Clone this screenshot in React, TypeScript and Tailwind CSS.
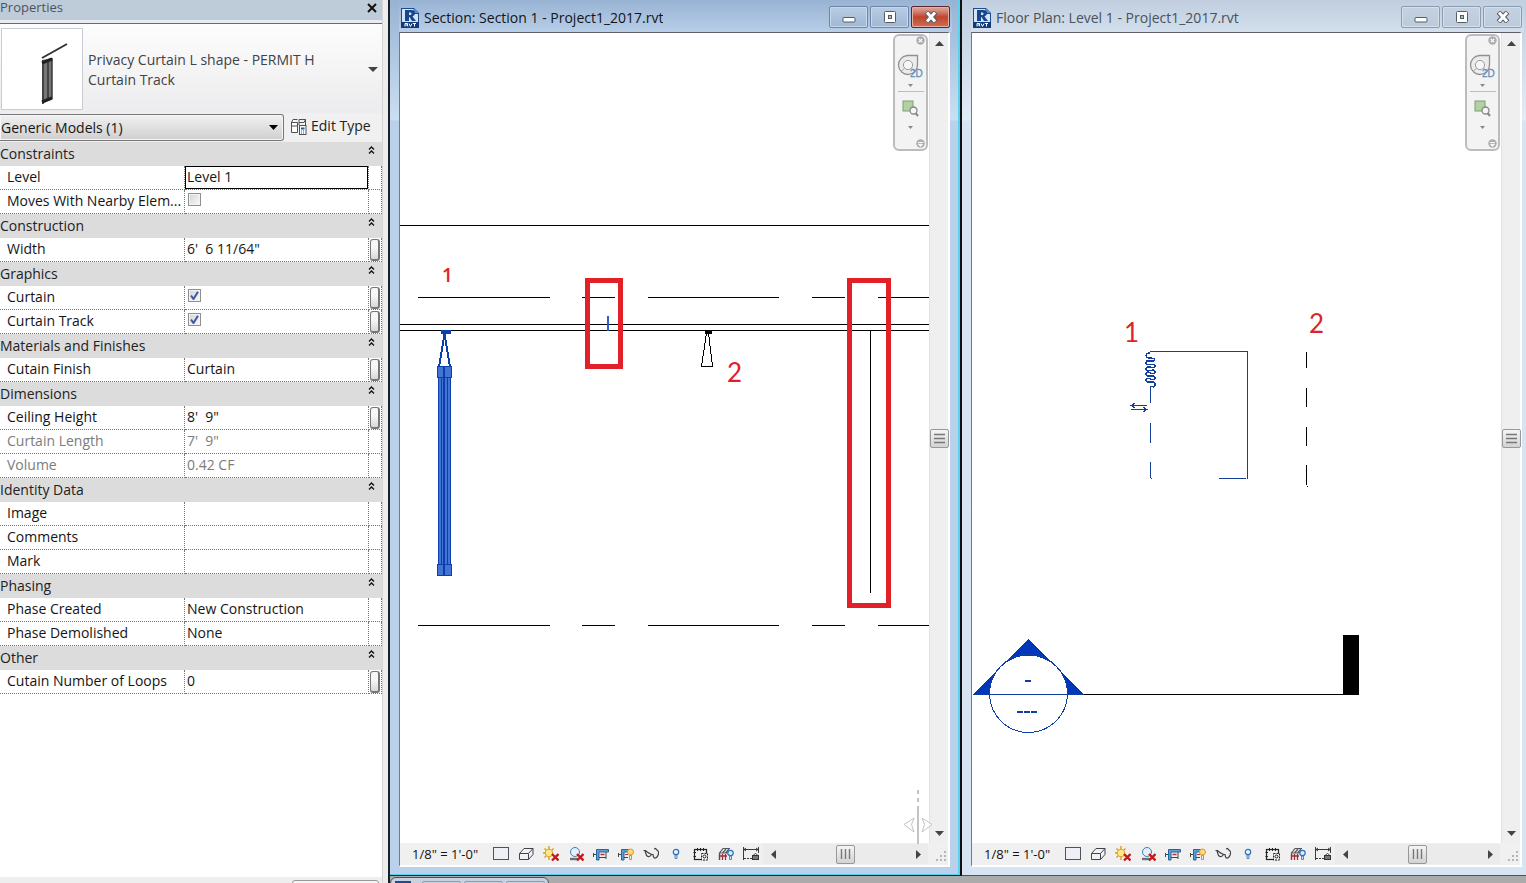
import React from "react";

type Row = {
  id: string;
  name: string;
  value?: string;
  checked?: boolean;
  link?: boolean;
  muted?: boolean;
  focus?: boolean;
};

const groups: { title: string; rows: Row[] }[] = [
  {
    title: "Constraints",
    rows: [
      { id: "level", name: "Level", value: "Level 1", focus: true },
      { id: "moves", name: "Moves With Nearby Elem...", checked: false },
    ],
  },
  { title: "Construction", rows: [{ id: "width", name: "Width", value: "6'  6 11/64\"", link: true }] },
  {
    title: "Graphics",
    rows: [
      { id: "curtain", name: "Curtain", checked: true, link: true },
      { id: "track", name: "Curtain Track", checked: true, link: true },
    ],
  },
  { title: "Materials and Finishes", rows: [{ id: "finish", name: "Cutain Finish", value: "Curtain", link: true }] },
  {
    title: "Dimensions",
    rows: [
      { id: "ceiling", name: "Ceiling Height", value: "8'  9\"", link: true },
      { id: "length", name: "Curtain Length", value: "7'  9\"", muted: true },
      { id: "volume", name: "Volume", value: "0.42 CF", muted: true },
    ],
  },
  {
    title: "Identity Data",
    rows: [
      { id: "image", name: "Image", value: "" },
      { id: "comments", name: "Comments", value: "" },
      { id: "mark", name: "Mark", value: "" },
    ],
  },
  {
    title: "Phasing",
    rows: [
      { id: "created", name: "Phase Created", value: "New Construction" },
      { id: "demolished", name: "Phase Demolished", value: "None" },
    ],
  },
  { title: "Other", rows: [{ id: "loops", name: "Cutain Number of Loops", value: "0", link: true }] },
];

function PropertyRow({ row }: { row: Row }) {
  return (
    <tr className="h-6">
      <th scope="row" className="h-6 border-r border-b border-dotted border-[#777] p-0 pl-[7px] text-left font-normal">
        <label htmlFor={row.id} className={`block h-[23px] leading-[22px] whitespace-nowrap ${row.muted ? "text-[#7c7c7c]" : "text-[#151515]"}`}>
          {row.name}
        </label>
      </th>
      <td className="h-6 border-r border-b border-dotted border-[#777] p-0">
        {row.checked !== undefined ? (
          <span className="flex h-[23px] items-start pt-[3px] pl-[3px]">
            <input
              id={row.id}
              type="checkbox"
              defaultChecked={row.checked}
              className="peer size-[13px] appearance-none border border-[#8e8f8f] bg-linear-to-br from-[#cfd3da] to-[#fbfbfb] shadow-[inset_0_0_0_1px_#f4f4f4]"
            />
            <svg className="pointer-events-none invisible mt-[2px] -ml-[11px] size-[9px] peer-checked:visible" viewBox="0 0 9 9" aria-hidden="true">
              <path d="M1 4.5 3.5 8 8 0.8" fill="none" stroke="#42589b" strokeWidth="2" />
            </svg>
          </span>
        ) : (
          <input
            id={row.id}
            type="text"
            defaultValue={row.value}
            disabled={row.muted}
            className={`block h-[23px] w-full bg-white pb-[2px] outline-none ${row.focus ? "border border-black pl-px" : "pl-[2px]"} ${row.muted ? "text-[#7c7c7c]" : "text-[#151515]"}`}
          />
        )}
      </td>
      <td className="h-6 border-r border-b border-dotted border-[#777] p-0">
        {row.link && (
          <button
            type="button"
            aria-label={`Associate ${row.name}`}
            className="mt-px ml-px block h-[22px] w-[10px] rounded-[3px] border border-r-2 border-b-2 border-[#777] bg-linear-to-b from-[#f7f7f7] from-40% to-[#d8d8d8]"
          />
        )}
      </td>
    </tr>
  );
}

function PropertiesPanel() {
  return (
    <aside className="flex w-[390px] shrink-0 border-r-2 border-[#1c1f24] bg-[#ededed]">
      <div className="flex w-[383px] flex-col border-r border-[#d5d5d5] bg-white">
        <header className="flex h-5 items-center justify-between bg-[#becbd9] pr-1">
          <h1 className="-mt-[6px] text-[13px] leading-5 text-[#4b545e]">Properties</h1>
          <button type="button" aria-label="Close properties" className="mb-1 flex size-3 items-center justify-center">
            <svg className="size-[10px]" viewBox="0 0 10 10">
              <path d="M1 1 9 9M9 1 1 9" stroke="#111" strokeWidth="2" />
            </svg>
          </button>
        </header>
        <div className="border-t-[3px] border-[#e9edf1]">
          <div className="flex h-[90px] items-center border-t border-[#6b6b6b] bg-linear-to-b from-[#fdfdfd] to-[#ececee] pt-px pl-px">
            <div className="flex h-[82px] w-[82px] border border-[#cbccd3] bg-white">
              <svg className="size-full" viewBox="0 0 80 80" aria-hidden="true">
                <path d="M40 29 65 15" stroke="#333" strokeWidth="2" />
                <path d="M40 31 50 29V70L40 75Z" fill="#777" />
                <path d="M41 31V75M46 31V72M50 29V70" stroke="#303030" strokeWidth="1.4" />
                <path d="M40 34 50 30M40 73 50 69" stroke="#222" strokeWidth="3" />
              </svg>
            </div>
            <p className="ml-[5px] flex-1 pt-[2px] text-sm leading-5 text-[#414244]">
              Privacy Curtain L shape - PERMIT H
              <br />
              Curtain Track
            </p>
            <button type="button" aria-label="Change type" className="mr-1 flex h-8 w-[10px] items-center justify-center">
              <svg className="h-[5px] w-[10px]" viewBox="0 0 10 5">
                <path d="M0 0H10L5 5Z" fill="#444" />
              </svg>
            </button>
          </div>
        </div>
        <div className="flex h-[29px] items-center bg-[#f0f0f0]">
          <div className="relative h-[27px] w-[284px]">
            <select
              aria-label="Category filter"
              className="h-full w-full appearance-none rounded-r-[3px] border border-l-0 border-[#777] bg-linear-to-b from-[#f1f1f1] to-[#cfcfcf] pl-px text-sm text-[#151515] shadow-[inset_0_0_0_1px_#f6f6f6]"
            >
              <option>Generic Models (1)</option>
            </select>
            <svg className="pointer-events-none absolute top-[11px] right-[6px] h-[5px] w-[9px]" viewBox="0 0 9 5" aria-hidden="true">
              <path d="M0 0H9L4.5 5Z" fill="#000" />
            </svg>
          </div>
          <button type="button" className="ml-[6px] flex items-center gap-1 pb-[3px] text-sm text-[#222]">
            <svg className="size-[17px]" viewBox="0 0 17 17" aria-hidden="true">
              <path d="M1.500 4.500 3 1.500H7.500M1.500 4.500V8M1.500 4.500H7.500V8H1.500ZM1.500 8V14.500H7.500V8M9 1.500H15.500V7M9 1.500V4.500H14L15.500 1.500M9 4.500V7" fill="#fff" stroke="#4b5157" />
              <rect x="9.500" y="7.500" width="6.500" height="9" fill="#fff" stroke="#4b5157" />
              <path d="M11 10.500H14.500" stroke="#1e5d9e" strokeWidth="2" />
              <path d="M11 13H12M13 13H14M11 15H12M13 15H14" stroke="#1e5d9e" />
            </svg>
            Edit Type
          </button>
        </div>
        <table className="w-full table-fixed border-separate border-spacing-0 text-sm">
          <colgroup>
            <col className="w-[185px]" />
            <col />
            <col className="w-[13px]" />
          </colgroup>
          {groups.map((g) => (
            <tbody key={g.title}>
              <tr className="h-6 bg-[#dcdcdc]">
                <th scope="colgroup" colSpan={3} className="h-6 p-0 text-left font-normal text-[#222]">
                  <div className="flex h-6 items-center justify-between pr-[7px]">
                    <span className="leading-6">{g.title}</span>
                    <button type="button" aria-label={`Collapse ${g.title}`} className="mb-2">
                      <svg className="h-2 w-[7px]" viewBox="0 0 7 8">
                        <path d="M1 3.500 3.500 1 6 3.500M1 7.500 3.500 5 6 7.500" fill="none" stroke="#111" strokeWidth="1.300" />
                      </svg>
                    </button>
                  </div>
                </th>
              </tr>
              {g.rows.map((r) => (
                <PropertyRow key={r.id} row={r} />
              ))}
            </tbody>
          ))}
        </table>
        <div className="flex-1" />
        <footer className="flex h-[6px] shrink-0 justify-end overflow-hidden bg-[#eeeeee] pt-[3px] pr-[3px]">
          <button type="button" aria-label="Apply" className="h-6 w-[87px] rounded-[3px] border border-[#999] bg-[#f6f6f6]" />
        </footer>
      </div>
    </aside>
  );
}

function AppIcon() {
  return (
    <svg className="h-[20px] w-[18px] shrink-0" viewBox="0 0 18 20" aria-hidden="true">
      <path d="M0 0H13L18 5V20H0Z" fill="#1d4d91" />
      <path d="M1 1H12.500V6H17V14H1Z" fill="#d5e4f4" />
      <path d="M13 0 18 5H13Z" fill="#5b8ac3" />
      <path d="M4 2H10.500Q14 2 14 5.200 14 7.700 11.500 8.500L15 13H11L8.500 9H8V13H4ZM8 4.500V7H9.500Q10.500 7 10.500 5.700 10.500 4.500 9.500 4.500Z" fill="#17468c" fillRule="evenodd" />
      <path d="M0 14H18V20H0Z" fill="#103a78" />
      <path d="M4 18.500V15.500H6.500V17H4.500M6 17 7 18.500M8 15.500 9.500 18.500 11 15.500M12 15.500H15M13.500 15.500V18.500" fill="none" stroke="#fff" />
    </svg>
  );
}

function CaptionButton({ kind, active }: { kind: "min" | "max" | "close"; active: boolean }) {
  const red = kind === "close" && active;
  const tone = red
    ? "border-[#5b2530] bg-linear-to-b from-[#d99a90] from-10% via-[#c0432c] via-50% to-[#cf6e50] shadow-[inset_0_0_0_1px_#e5b0a5]"
    : active
      ? "border-[#6d87a8] bg-linear-to-b from-[#b9cce3] to-[#9fb8d5] shadow-[inset_0_0_0_1px_#c9d9ec]"
      : "border-[#8b9bb0] bg-linear-to-b from-[#c4d1e0] to-[#bccbdc] shadow-[inset_0_0_0_1px_#d5e0ec]";
  return (
    <button type="button" aria-label={kind} className={`flex h-[22px] w-[39px] items-center justify-center rounded-[2px] border ${tone}`}>
      <svg className="h-3 w-[14px]" viewBox="0 0 14 12" aria-hidden="true">
        {kind === "min" && <rect x="1" y="6.500" width="12" height="4.500" rx="1" fill="#fff" stroke="#555c66" />}
        {kind === "max" && (
          <>
            <rect x="1.500" y="0.500" width="11" height="11" rx="1" fill="#fff" stroke="#555c66" />
            <rect x="5.500" y="4.500" width="3" height="3" fill="#a9bfd9" stroke="#555c66" />
          </>
        )}
        {kind === "close" && (
          <>
            <path d="M2.500 1 11.500 11M11.500 1 2.500 11" stroke="#555c66" strokeWidth="5" />
            <path d="M3 1.500 11 10.500M11 1.500 3 10.500" stroke="#fff" strokeWidth="3" />
          </>
        )}
      </svg>
    </button>
  );
}

function NavigationBar() {
  return (
    <nav aria-label="Navigation bar" className="absolute top-px right-px z-20 flex h-[117px] w-[35px] flex-col items-center rounded-[6px] border-2 border-[#bcbcbc] bg-[#f3f3f3]">
      <button type="button" aria-label="Close navigation bar" className="mr-px self-end">
        <svg className="size-[9px]" viewBox="0 0 9 9">
          <circle cx="4.500" cy="4.500" r="4.200" fill="#adadad" />
          <path d="M2.800 2.800 6.200 6.200M6.200 2.800 2.800 6.200" stroke="#fff" strokeWidth="1.200" />
        </svg>
      </button>
      <button type="button" aria-label="Steering wheel 2D" className="mt-[9px] mr-px">
        <svg className="h-[25px] w-[26px]" viewBox="0 0 26 25">
          <path d="M10.500 1.500H20.500V10.500A9.500 9.500 0 1 1 10.500 1.500Z" fill="#ececec" stroke="#8e9092" strokeWidth="1.300" />
          <circle cx="11" cy="11" r="4.600" fill="#f6f6f6" stroke="#9a9c9e" />
          <path d="M4 17.500 7.500 14.500M14.500 14.500 17 16.500" stroke="#a2a4a6" />
          <text x="13" y="23" fontFamily="Liberation Sans, sans-serif" fontSize="10" fill="#6691b9" stroke="#6691b9" strokeWidth="0.300">2D</text>
        </svg>
      </button>
      <svg className="mt-[5px] h-[3px] w-[5px]" viewBox="0 0 5 3" aria-hidden="true">
        <path d="M0 0H5L2.500 3Z" fill="#888" />
      </svg>
      <span className="mt-1 h-px w-[26px] bg-[#bdbdbd]" />
      <button type="button" aria-label="Zoom region" className="mt-2">
        <svg className="size-[17px]" viewBox="0 0 17 17">
          <rect x="1" y="1" width="10" height="10" fill="#b4d1a3" stroke="#7f9e77" />
          <circle cx="11.500" cy="10.500" r="3.500" fill="#f5f5f5" stroke="#85878a" strokeWidth="1.300" />
          <path d="M13.500 13 16 16" stroke="#85878a" strokeWidth="2" />
        </svg>
      </button>
      <svg className="mt-[9px] h-[3px] w-[5px]" viewBox="0 0 5 3" aria-hidden="true">
        <path d="M0 0H5L2.500 3Z" fill="#888" />
      </svg>
      <button type="button" aria-label="Navigation options" className="mt-auto mr-px mb-px self-end">
        <svg className="size-[9px]" viewBox="0 0 9 9">
          <circle cx="4.500" cy="4.500" r="4.200" fill="#adadad" />
          <path d="M2 3.500H7M2.500 5.300H6.500L4.500 7.500Z" stroke="#fff" strokeWidth="0.900" fill="#fff" />
        </svg>
      </button>
    </nav>
  );
}

const arrowPath = {
  up: "M4.500 0 9 5H0Z",
  down: "M0 0H9L4.500 5Z",
  left: "M5 0V9L0 4.500Z",
  right: "M0 0 5 4.500 0 9Z",
};

function ScrollArrow({ dir }: { dir: "up" | "down" | "left" | "right" }) {
  const vertical = dir === "up" || dir === "down";
  return (
    <button type="button" aria-label={`Scroll ${dir}`} className={`flex items-center justify-center ${vertical ? "h-5 w-full" : "h-full w-5"}`}>
      <svg className={vertical ? "h-[5px] w-[9px]" : "h-[9px] w-[5px]"} viewBox={vertical ? "0 0 9 5" : "0 0 5 9"}>
        <path d={arrowPath[dir]} fill="#444" />
      </svg>
    </button>
  );
}

function Thumb({ vertical }: { vertical?: boolean }) {
  return (
    <button
      type="button"
      aria-label="Scroll thumb"
      className="flex h-[19px] w-[19px] items-center justify-center rounded-[2px] border border-[#989898] bg-linear-to-b from-[#f5f5f5] to-[#d3d3d3]"
    >
      <svg className="size-[11px]" viewBox="0 0 11 11">
        <path d={vertical ? "M0 1.500H11M0 5.500H11M0 9.500H11" : "M1.500 0V10M5.500 0V10M9.500 0V10"} stroke="#777" strokeWidth="1.400" />
      </svg>
    </button>
  );
}

const Bulb = ({ x, y, c }: { x: number; y: number; c: string }) => (
  <g>
    <circle cx={x} cy={y} r="2.700" fill={c} stroke="#2b73c2" strokeWidth="1.200" />
    <path d={`M${x - 1} ${y + 3}h2v3.500h-2z`} fill="#d5e2ef" stroke="#3f6fa5" strokeWidth="0.800" />
  </g>
);

const RedX = () => <path d="M9 8 15.500 14.500M15.500 8 9 14.500" stroke="#c51818" strokeWidth="2.400" />;

const viewTools: { name: string; art: React.ReactNode }[] = [
  { name: "Detail level", art: <rect x="0.500" y="1.500" width="15" height="12" fill="#eef0f5" stroke="#50545a" /> },
  {
    name: "Visual style",
    art: <path d="M1.500 7.500 6 2.500H15V8.500L10.500 13.500H1.500ZM1.500 7.500H10.500V13.500M10.500 7.500 15 2.500" fill="#f1f2f4" stroke="#41454b" />,
  },
  {
    name: "Sun path off",
    art: (
      <>
        <path d="M6 0V3M6 11V14M0 7H2M1.500 2.500 3 4M10.500 2.500 9 4M1.500 11.500 3 10" stroke="#d99a12" strokeWidth="1.300" />
        <circle cx="6" cy="7" r="3.800" fill="#ffe98a" stroke="#dfa21c" />
        <RedX />
      </>
    ),
  },
  {
    name: "Shadows off",
    art: (
      <>
        <path d="M2 13H10" stroke="#6c7075" strokeWidth="2.400" />
        <circle cx="7" cy="6" r="4.500" fill="#e4f0fa" stroke="#3f7dbd" />
        <RedX />
      </>
    ),
  },
  {
    name: "Crop view",
    art: (
      <>
        <path d="M3.500 14V3.500H15.500V6H6V14Z" fill="#5f9fd3" stroke="#24649f" />
        <path d="M0 8.500H3M13 6V13M0.500 7V11M6 11.500H13" fill="none" stroke="#43474c" />
        <path d="M7.500 8.500H11.500" stroke="#c92828" strokeWidth="1.500" />
      </>
    ),
  },
  {
    name: "Show crop region",
    art: (
      <>
        <path d="M3.500 14V3.500H12V6H6V14Z" fill="#5f9fd3" stroke="#24649f" />
        <path d="M0 8.500H3M0.500 7V11M6 11.500H10" fill="none" stroke="#43474c" />
        <path d="M7 8.500H10" stroke="#c92828" />
        <circle cx="12.500" cy="6" r="3" fill="#ffd978" stroke="#d99a2e" />
        <path d="M11.500 9.500h2v4h-2z" fill="#eee" stroke="#777" strokeWidth="0.700" />
      </>
    ),
  },
  {
    name: "Temporary hide",
    art: <path d="M0.500 4.500H2.500L5.500 7M2 5 3.500 9.500Q6.500 12 8.500 8.500L5 6.500M8.500 8.500 10 8.500Q10.500 13.500 13.500 11.500 16 9 15.500 5.500L12.500 2.500 11 3" fill="none" stroke="#3e4247" strokeWidth="1.200" />,
  },
  { name: "Reveal hidden", art: <Bulb x={8} y={6} c="#eaf4fd" /> },
  {
    name: "Temporary view properties",
    art: (
      <>
        <rect x="1.500" y="3.500" width="12" height="10" fill="none" stroke="#222" strokeWidth="1.200" />
        <path d="M4.500 2V5M7.500 2V5M10.500 2V5M0.500 6.500H3M0.500 10.500H3" stroke="#222" />
        <rect x="8.500" y="7.500" width="6" height="6.500" fill="#f4f4f4" stroke="#222" strokeDasharray="2 1" />
        <circle cx="11.500" cy="10.500" r="1.500" fill="none" stroke="#222" />
      </>
    ),
  },
  {
    name: "Analytical model",
    art: (
      <>
        <path d="M1.500 14V7L5 2.500H12M4.500 7 8 3M7.500 7 11 3M1.500 7H10" fill="none" stroke="#565a60" strokeWidth="1.200" />
        <path d="M1.500 8V14M4.500 8V14M7.500 8V14M1 10H9" stroke="#9b3038" strokeWidth="1.300" />
        <Bulb x={12.5} y={7} c="#dcecfa" />
      </>
    ),
  },
  {
    name: "Constraints",
    art: (
      <>
        <path d="M0.500 1V14M15.500 1V7M1 3.500H15M3 2 1 3.500 3 5M13 2 15 3.500 13 5" fill="none" stroke="#383c41" />
        <path d="M1 12.500H9" stroke="#383c41" strokeDasharray="2 1" />
        <rect x="9.500" y="9.500" width="6" height="4" fill="#777" stroke="#333" />
        <path d="M10.500 9.500Q12.500 5.500 14.500 9.500" fill="none" stroke="#444" />
      </>
    ),
  },
];

function ViewControlBar() {
  return (
    <div className="flex h-[22px] shrink-0 items-center overflow-hidden bg-[#f0f0f0]">
      <button type="button" className="w-[88px] shrink-0 pl-3 text-left text-[13px] leading-5 whitespace-nowrap text-[#111]">
        1/8" = 1'-0"
      </button>
      {viewTools.map((t) => (
        <button key={t.name} type="button" aria-label={t.name} className="flex h-full w-[25px] shrink-0 items-center justify-center">
          <svg className="size-4" viewBox="0 0 16 16">
            {t.art}
          </svg>
        </button>
      ))}
      <div className="flex h-[20px] flex-1 items-center justify-between bg-[#ebebeb]">
        <ScrollArrow dir="left" />
        <Thumb />
        <ScrollArrow dir="right" />
      </div>
      <div className="flex w-5 shrink-0 items-end justify-end pt-[6px] pr-px">
        <svg className="size-3" viewBox="0 0 12 12" aria-hidden="true">
          <path d="M9 0h2v2H9zM5 4h2v2H5zM9 4h2v2H9zM1 8h2v2H1zM5 8h2v2H5zM9 8h2v2H9z" fill="#b5b5b5" />
        </svg>
      </div>
    </div>
  );
}

function DocWindow({ title, active, children }: { title: string; active?: boolean; children: React.ReactNode }) {
  const on = !!active;
  return (
    <section
      aria-label={title}
      className={`flex min-w-0 flex-col pb-2 pl-[9px] ${
        on
          ? "border-r-2 border-b border-b-[#15262e] border-r-[#0c1013] bg-linear-to-b from-[#98b3d3] via-[#cbdff3] via-[120px] to-[#b9d1ea] to-[121px] pr-[10px] shadow-[inset_-2px_-1px_0_#58d3ee]"
          : "border-b border-[#4a5258] bg-linear-to-b from-[#bfcedf] via-[#e2ecf6] via-[120px] to-[#d7e4f2] to-[121px] pr-1"
      }`}
    >
      <header className={`-mr-[2px] flex h-8 shrink-0 items-center justify-between pl-[2px] ${on ? "bg-linear-to-b from-[#98b3d3] to-[#b8cee8]" : "bg-linear-to-b from-[#c0cedf] to-[#d3dfec]"}`}>
        <div className="flex min-w-0 items-center gap-[5px] pt-[3px]">
          <AppIcon />
          <h2 className={`truncate text-sm leading-5 ${on ? "text-[#10151c]" : "text-[#4a525c]"}`}>{title}</h2>
        </div>
        <div className="flex shrink-0 gap-[2px] pt-[2px] pr-[2px]">
          <CaptionButton kind="min" active={on} />
          <CaptionButton kind="max" active={on} />
          <CaptionButton kind="close" active={on} />
        </div>
      </header>
      <div className="flex min-h-0 flex-1 flex-col border-t border-r-2 border-b-2 border-l border-t-[#5d6268] border-r-white border-b-white border-l-[#777b80] bg-white">
        <div className="flex min-h-0 flex-1">
          <div className="relative min-w-0 flex-1">
            {children}
            <NavigationBar />
          </div>
          <div className="flex w-[19px] shrink-0 flex-col items-center justify-between border-l border-[#e2e2e2] bg-[#efefef]">
            <ScrollArrow dir="up" />
            <Thumb vertical />
            <ScrollArrow dir="down" />
          </div>
        </div>
        <ViewControlBar />
      </div>
    </section>
  );
}

const levelDashes = "M418 0H550M582 0H615M648 0H779M812 0H845M878 0H929";

function SectionDrawing() {
  return (
    <svg className="absolute inset-0 z-10 h-full w-full overflow-visible" aria-label="Section 1 drawing">
      <g transform="translate(-400 -33)" fill="none" stroke="#000" shapeRendering="crispEdges">
        <path d="M400 225.500H929M400 324.500H929M400 330.500H929M870.500 330V593" />
        <path d={levelDashes} transform="translate(0 297.500)" />
        <path d={levelDashes} transform="translate(0 625.500)" />
        <path d="M706.500 333 701.500 366.500H712.500L708.500 333" />
        <path d="M705 332H712" strokeWidth="3" />
        <path d="M608 316V331" stroke="#2c5fc4" strokeWidth="2" />
        <g stroke="#0c3fae">
          <path d="M441 332H451" strokeWidth="4" />
          <path d="M444.500 334 439 367M444.500 334 450 367" strokeWidth="2" />
          <path d="M438.500 376H450.500V566H438.500Z" fill="#4474d3" />
          <path d="M437.500 366.500H451.500V377.500H437.500ZM437.500 564.500H451.500V575.500H437.500Z" fill="#4474d3" />
          <path d="M444 367V575" strokeWidth="2" />
          <path d="M441.500 378V564M447.500 378V564" />
        </g>
        <path d="M587.500 280.500H620.500V366.500H587.500ZM849.500 280.500H888.500V605.500H849.500Z" stroke="#e22027" strokeWidth="5" />
        <g stroke="#c3c3c3" shapeRendering="auto">
          <path d="M918 790V794M918 798V802M918 806V844" strokeWidth="2" />
          <path d="M914 818 904 824.500 914 832 911.500 824.500ZM922 818 932 824.500 922 832 924.500 824.500Z" fill="#fff" />
        </g>
      </g>
      <g transform="translate(-400 -33)" fill="#e22027">
        <text x="442" y="282" fontSize="19" fontWeight="600" fontFamily="Open Sans, sans-serif">1</text>
        <text x="727" y="382" fontSize="26" fontFamily="Lato, sans-serif">2</text>
      </g>
    </svg>
  );
}

function PlanDrawing() {
  return (
    <svg className="absolute inset-0 h-full w-full overflow-hidden" aria-label="Level 1 drawing">
      <g transform="translate(-972 -33)" fill="none" shapeRendering="crispEdges">
        <g stroke="#123f9c">
          <path d="M1150.500 386V403M1150.500 423V443M1150.500 462V478M1151 478.500H1152" />
          <path d="M1150.500 352V351.500H1247.500V478.500M1219 478.500H1246" />
          <path
            d="M1150 353C1145 353 1145 358 1150 358S1156 360 1153 361 1146 359 1146 363 1155 362 1155 366 1146 364 1146 369 1155 367 1155 372 1146 369 1146 374 1155 373 1155 378 1146 375 1146 380 1155 379 1155 384 1151 386 1150.500 386"
            strokeWidth="1.500"
          />
          <path d="M1147 405.500H1131L1135 403M1131 405.500 1135 408M1131 409.500H1147L1143 407M1147 409.500 1143 412" />
        </g>
        <path d="M1306.500 352V368M1306.500 388V407M1306.500 427V446M1306.500 465V485M1307 486.500H1308" stroke="#000" />
        <path d="M1083 694.500H1344" stroke="#000" />
        <path d="M1343 635H1359V695H1343Z" fill="#000" />
        <path d="M973 694.500 1028 639 1083.500 694.500H1067.500A39 39 0 0 0 989.500 694.500Z" fill="#0038bb" />
        <circle cx="1028.500" cy="693.500" r="39" stroke="#0f3ea4" />
        <path d="M973 694.500H1083" stroke="#0f3ea4" />
        <path d="M1025 681H1031M1017 712H1023M1024 712H1030M1031 712H1037" stroke="#0f3ea4" strokeWidth="2" />
      </g>
      <g transform="translate(-972 -33)" fill="#d9252b" fontFamily="Lato, sans-serif" fontSize="26">
        <text x="1124" y="342">1</text>
        <text x="1309" y="333">2</text>
      </g>
    </svg>
  );
}

export default function App() {
  return (
    <div className="flex h-screen min-h-[720px] overflow-hidden bg-[#ababab] font-['Open_Sans','Noto_Sans',sans-serif]">
      <PropertiesPanel />
      <main className="flex min-w-0 flex-1 flex-col">
        <div className="grid min-h-0 flex-1 grid-cols-[minmax(0,572fr)_minmax(0,564fr)]">
          <DocWindow title="Section: Section 1 - Project1_2017.rvt" active>
            <SectionDrawing />
          </DocWindow>
          <DocWindow title="Floor Plan: Level 1 - Project1_2017.rvt">
            <PlanDrawing />
          </DocWindow>
        </div>
        <div className="h-[7px] shrink-0 overflow-hidden pt-px">
          <div className="flex h-8 w-[159px] gap-[3px] rounded-t-[6px] border border-[#4a4f55] bg-[#c6d2df] pt-[3px] pl-1">
            <span className="mr-2 h-5 w-4 bg-[#1d4d91]" />
            <button type="button" aria-label="Restore" className="h-5 w-[39px] rounded-[2px] border border-[#8b9bb0]" />
            <button type="button" aria-label="Maximize" className="h-5 w-[39px] rounded-[2px] border border-[#8b9bb0]" />
            <button type="button" aria-label="Close" className="h-5 w-[39px] rounded-[2px] border border-[#8b9bb0]" />
          </div>
        </div>
      </main>
    </div>
  );
}
